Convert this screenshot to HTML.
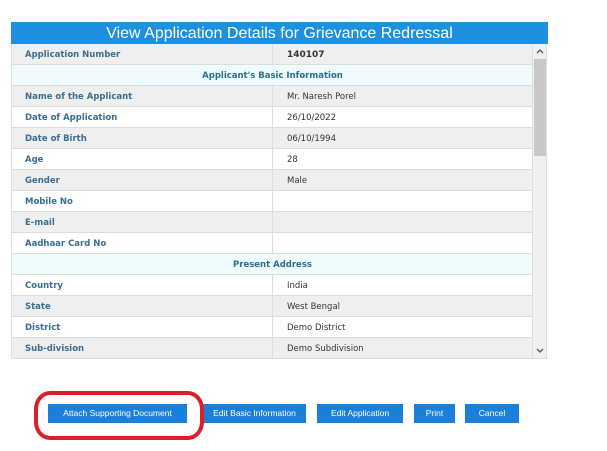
<!DOCTYPE html>
<html><head><style>
body{margin:0;width:607px;height:451px;background:#fff;font-family:"DejaVu Sans","Liberation Sans",sans-serif;position:relative;overflow:hidden}
.hdr{position:absolute;left:11px;top:22px;width:537px;height:22px;background:#1e90e0;color:#fff;font-family:"Liberation Sans",sans-serif;font-size:16px;text-align:center;line-height:24px}
.tbl{position:absolute;left:11px;top:44px;width:521px;height:315px;border-left:1px solid #ddd;overflow:hidden}
.r{height:20px;border-bottom:1px solid #ddd;display:flex;font-size:8.5px;line-height:23px}
.r .a{width:247px;padding-left:13px;color:#3b6d8f;font-weight:bold;border-right:1px solid #ddd}
.r .b{padding-left:14px;color:#333}
.g{background:#efefef}.w{background:#fff}
.s{background:#effbfd;justify-content:center;color:#2a6f8e;font-weight:bold}
.sb{position:absolute;left:532px;top:44px;width:15px;height:315px;background:#f0f0f0;border:1px solid #ddd;border-top:none;box-sizing:border-box}
.th{position:absolute;left:1px;top:15px;width:12px;height:97px;background:#c8c8c8}
.ar{position:absolute;left:2px}
.btn{position:absolute;top:404px;height:19px;background:#1a7fd9;color:#fff;font-family:"Liberation Sans",sans-serif;font-size:8.5px;line-height:19px;text-align:center}
.ov{position:absolute;left:34px;top:391px;width:162px;height:41px;border:4px solid #d8202a;border-radius:16px/18px}
</style></head><body>
<div class="hdr">View Application Details for Grievance Redressal</div>
<div class="tbl">
<div class="r g"><div class="a">Application Number</div><div class="b" style="font-weight:bold;font-size:9px">140107</div></div>
<div class="r s">Applicant's Basic Information</div>
<div class="r g"><div class="a">Name of the Applicant</div><div class="b">Mr. Naresh Porel</div></div>
<div class="r w"><div class="a">Date of Application</div><div class="b">26/10/2022</div></div>
<div class="r g"><div class="a">Date of Birth</div><div class="b">06/10/1994</div></div>
<div class="r w"><div class="a">Age</div><div class="b">28</div></div>
<div class="r g"><div class="a">Gender</div><div class="b">Male</div></div>
<div class="r w"><div class="a">Mobile No</div><div class="b"></div></div>
<div class="r g"><div class="a">E-mail</div><div class="b"></div></div>
<div class="r w"><div class="a">Aadhaar Card No</div><div class="b"></div></div>
<div class="r s">Present Address</div>
<div class="r w"><div class="a">Country</div><div class="b">India</div></div>
<div class="r g"><div class="a">State</div><div class="b">West Bengal</div></div>
<div class="r w"><div class="a">District</div><div class="b">Demo District</div></div>
<div class="r g"><div class="a">Sub-division</div><div class="b">Demo Subdivision</div></div>
</div>
<div class="sb">
<svg class="ar" style="top:3px" width="10" height="8"><path d="M2 6 L5 3 L8 6" stroke="#555" stroke-width="1.3" fill="none"/></svg>
<div class="th"></div>
<svg class="ar" style="bottom:3px" width="10" height="8"><path d="M2 2 L5 5 L8 2" stroke="#555" stroke-width="1.3" fill="none"/></svg>
</div>
<div class="btn" style="left:48px;width:139px">Attach Supporting Document</div>
<div class="btn" style="left:203px;width:103px">Edit Basic Information</div>
<div class="btn" style="left:317px;width:86px">Edit Application</div>
<div class="btn" style="left:414px;width:41px">Print</div>
<div class="btn" style="left:465px;width:54px">Cancel</div>
<div class="ov"></div>
</body></html>
